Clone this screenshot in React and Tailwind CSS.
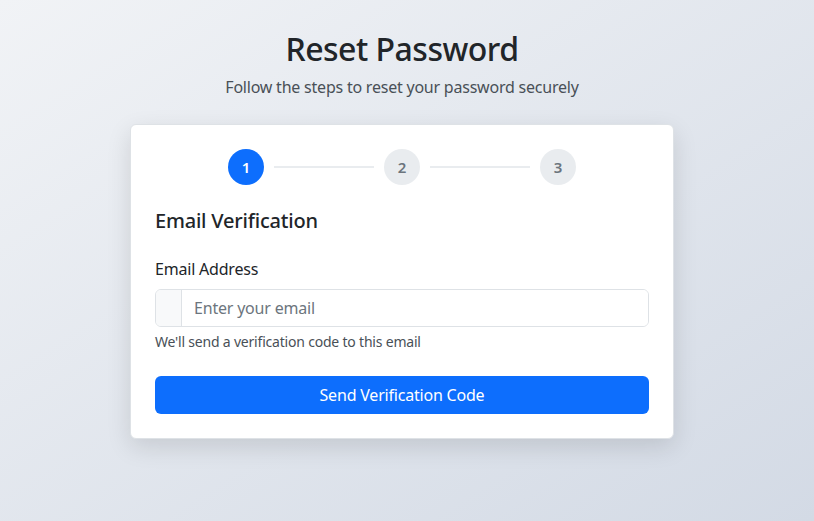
export default function App() {
  return (
    <div
      className="min-h-screen w-full bg-gradient-to-br from-[#f1f3f6] to-[#d3dae5] flex flex-col items-center pt-[30px] pr-[10px] text-[#212529]"
      style={{ fontFamily: '"Noto Sans", "Open Sans", sans-serif' }}
    >
      <h1 className="text-[32px] leading-[38px] font-medium m-0 tracking-[-0.5px]">Reset Password</h1>
      <p className="mt-[7px] text-[16px] leading-[24px] text-[#495057] tracking-[-0.22px]">
        Follow the steps to reset your password securely
      </p>
      <div className="mt-[25px] w-[544px] bg-white rounded-[6px] border border-[#dee2e6] shadow-[0_8px_24px_rgba(0,0,0,0.12)] p-6">
        <div className="flex items-center justify-center">
          <div className="w-9 h-9 rounded-full bg-[#0d6efd] text-white flex items-center justify-center text-[15px] font-semibold">1</div>
          <div className="w-[100px] h-[2px] bg-[#e9ecef] mx-[10px]"></div>
          <div className="w-9 h-9 rounded-full bg-[#e9ecef] text-[#6c757d] flex items-center justify-center text-[15px] font-semibold">2</div>
          <div className="w-[100px] h-[2px] bg-[#e9ecef] mx-[10px]"></div>
          <div className="w-9 h-9 rounded-full bg-[#e9ecef] text-[#6c757d] flex items-center justify-center text-[15px] font-semibold">3</div>
        </div>
        <h2 className="mt-6 text-[20px] leading-[24px] font-medium tracking-[-0.2px]">Email Verification</h2>
        <label className="block mt-6 text-[16px] leading-[24px] tracking-[-0.2px]">Email Address</label>
        <div className="mt-2 flex h-[38px] rounded-[6px] border border-[#dee2e6] overflow-hidden">
          <div className="w-[26px] bg-[#f8f9fa] border-r border-[#dee2e6]"></div>
          <input
            type="email"
            placeholder="Enter your email"
            className="flex-1 px-3 text-[16px] tracking-[-0.2px] outline-none placeholder:text-[#6c757d] bg-white"
          />
        </div>
        <p className="mt-1 text-[14px] leading-[21px] text-[#495057] tracking-[-0.2px]">
          We'll send a verification code to this email
        </p>
        <button className="mt-6 w-full h-[38px] rounded-[6px] bg-[#0d6efd] text-white text-[16px] tracking-[-0.2px]">
          Send Verification Code
        </button>
      </div>
    </div>
  );
}
